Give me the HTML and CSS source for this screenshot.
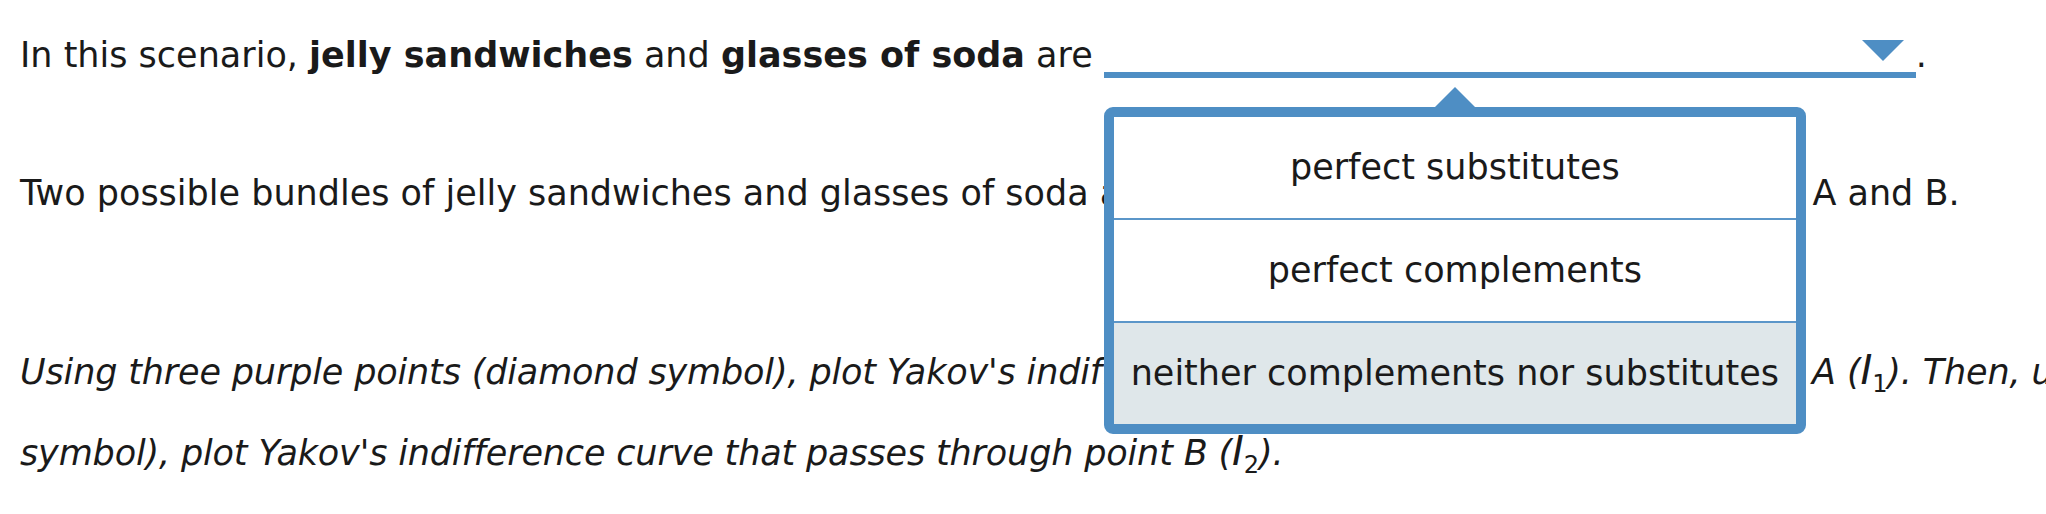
FILE: index.html
```html
<!DOCTYPE html>
<html lang="en">
<head>
  <meta charset="UTF-8">
  <title>Indifference Curves</title>
  <link rel="stylesheet" href="styles.css">
</head>
<body>
  <div class="question">
    <p class="prompt">
      In this scenario, <b>jelly sandwiches</b> and <b>glasses of soda</b> are
      <span class="dropdown">
        <span class="arrow"></span>
        <span class="menu">
          <span class="option">perfect substitutes</span>
          <span class="option">perfect complements</span>
          <span class="option active">neither complements nor substitutes</span>
        </span>
      </span>.
    </p>

    <p class="bundles">Two possible bundles of jelly sandwiches and glasses of soda are plotted in the graph below as points A and B.</p>

    <p class="task">
      Using three purple points (diamond symbol), plot Yakov's indifference curve that passes through point A (<span class="var">I<sub>1</sub></span>). Then, using three orange points (square<br>symbol), plot Yakov's indifference curve that passes through point B (<span class="var">I<sub>2</sub></span>).
    </p>
  </div>
</body>
</html>
```

FILE: styles.css
```css
body {
  margin: 0;
  font-family: "DejaVu Sans", Verdana, sans-serif;
  font-size: 35px;
  line-height: 81px;
  color: #1a1a1a;
  background-color: #fff;
  overflow: hidden;
}

.question {
  padding: 15px 0 0 20px;
}

p {
  margin: 0;
}

.bundles {
  margin-top: 57px;
}

.task {
  margin-top: 98px;
  font-style: italic;
  letter-spacing: -0.15px;
  white-space: nowrap;
}

.var {
  font-size: 1.15em;
  line-height: 0;
}

.var sub {
  font-size: 0.6em;
  font-style: normal;
  vertical-align: -0.35em;
}

/* dropdown blank */
.dropdown {
  position: relative;
  display: inline-block;
  width: 812px;
  height: 38px;
  box-sizing: border-box;
  border-bottom: 6px solid #4e8ec4;
  vertical-align: -11px;
}

.arrow {
  display: block;
  width: 0;
  height: 0;
  margin: 0 12px 0 auto;
  border-left: 21px solid transparent;
  border-right: 21px solid transparent;
  border-top: 21px solid #4e8ec4;
}

.menu {
  position: absolute;
  top: 67px;
  left: 0;
  display: flex;
  flex-direction: column;
  width: 702px;
  box-sizing: border-box;
  border: 10px solid #4e8ec4;
  border-radius: 9px;
  background-color: #fff;
  font-style: normal;
  letter-spacing: 0;
}

.menu::before {
  content: "";
  position: absolute;
  top: -30px;
  left: 50%;
  margin-left: -20px;
  border-left: 20px solid transparent;
  border-right: 20px solid transparent;
  border-bottom: 20px solid #4e8ec4;
}

.option {
  display: block;
  line-height: 101px;
  text-align: center;
  white-space: nowrap;
}

.option + .option {
  border-top: 2px solid #5b96c9;
}

.option.active {
  background-color: #dfe7ea;
}
```
